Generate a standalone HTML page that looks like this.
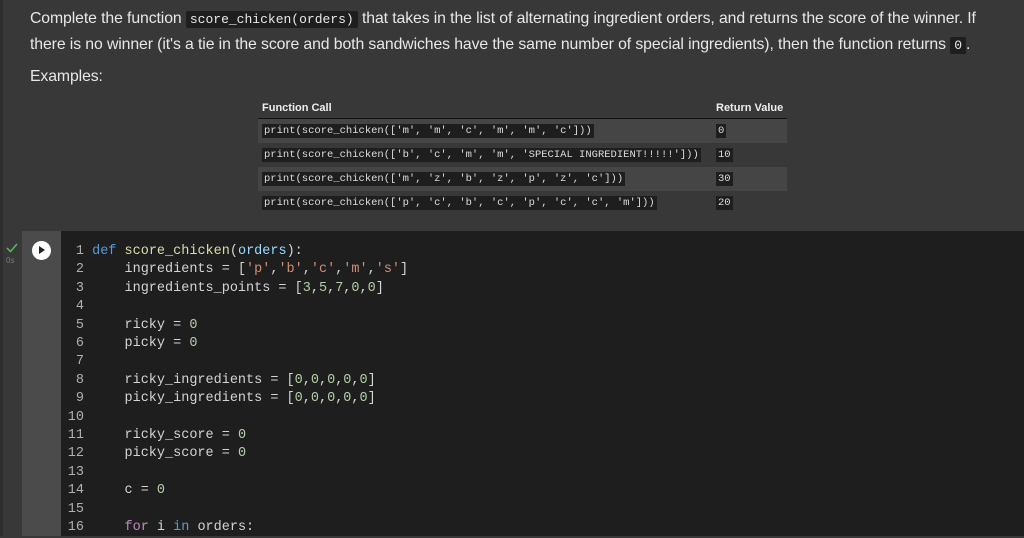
<!DOCTYPE html>
<html><head><style>
body{margin:0;width:1024px;height:536px;background:#383838;overflow:hidden;position:relative;font-family:"Liberation Sans",sans-serif;color:#e8e8e8}
.t{position:absolute;left:30px;font-size:15.8px;white-space:nowrap;letter-spacing:-0.1px}
.ic{background:#1e1e1e;padding:1px 4px;border-radius:2px;font-size:13px;font-family:"Liberation Mono",monospace;letter-spacing:0}
.edge{position:absolute;left:0;top:0;width:3px;height:536px;background:#2e2e2e}
table{position:absolute;left:258px;top:97px;border-collapse:collapse;font-size:11px}
th{font-weight:bold;text-align:left;height:21px;border-bottom:1px solid #111;padding:0 4px;color:#eee}
td{height:24px;padding:0 4px;font-family:"Liberation Mono",monospace;font-size:10.5px}
td span{background:#1e1e1e;padding:1px 2px;color:#ddd}
tr.s{background:#454545}
.gut{position:absolute;left:22px;top:231px;width:39px;height:305px;background:#4b4b4b}
.code{position:absolute;left:61px;top:231px;width:963px;height:305px;background:#1e1e1e}
.run{position:absolute;left:32px;top:241px;width:19px;height:19px;border-radius:50%;background:#fff}
.run:after{content:"";position:absolute;left:7px;top:5px;border-left:6px solid #222;border-top:4.5px solid transparent;border-bottom:4.5px solid transparent}
pre{position:absolute;left:64px;top:243px;margin:0;font-family:"Liberation Mono",monospace;font-size:13.5px;line-height:18.4px;color:#d4d4d4}
.n{color:#b0b0b0;display:inline-block;width:20px;text-align:right}
.k{color:#569cd6}.f{color:#dcdcaa}.p{color:#9cdcfe}.s{color:#ce9178}.d{color:#b5cea8}.c{color:#c586c0}
</style></head><body>
<div class="edge"></div>
<div class="t" style="top:10px">Complete the function <span class="ic">score_chicken(orders)</span> that takes in the list of alternating ingredient orders, and returns the score of the winner. If</div>
<div class="t" style="top:36px">there is no winner (it's a tie in the score and both sandwiches have the same number of special ingredients), then the function returns <span class="ic">0</span>.</div>
<div class="t" style="top:68px">Examples:</div>
<table>
<tr><th style="width:446px">Function Call</th><th style="text-align:right">Return Value</th></tr>
<tr class="s"><td><span>print(score_chicken(['m', 'm', 'c', 'm', 'm', 'c']))</span></td><td><span>0</span></td></tr>
<tr><td><span>print(score_chicken(['b', 'c', 'm', 'm', 'SPECIAL INGREDIENT!!!!!']))</span></td><td><span>10</span></td></tr>
<tr class="s"><td><span>print(score_chicken(['m', 'z', 'b', 'z', 'p', 'z', 'c']))</span></td><td><span>30</span></td></tr>
<tr><td><span>print(score_chicken(['p', 'c', 'b', 'c', 'p', 'c', 'c', 'm']))</span></td><td><span>20</span></td></tr>
</table>
<svg style="position:absolute;left:6px;top:243px" width="12" height="10"><path d="M1 5 L4.5 8.5 L11 1" stroke="#5cb85c" stroke-width="1.5" fill="none"/></svg>
<div style="position:absolute;left:6px;top:256px;font-size:8px;color:#777">0s</div>
<div class="gut"></div>
<div class="code"></div>
<div class="run"></div>
<pre><span class="n">1</span> <span class="k">def</span> <span class="f">score_chicken</span>(<span class="p">orders</span>):
<span class="n">2</span>     ingredients = [<span class="s">'p'</span>,<span class="s">'b'</span>,<span class="s">'c'</span>,<span class="s">'m'</span>,<span class="s">'s'</span>]
<span class="n">3</span>     ingredients_points = [<span class="d">3</span>,<span class="d">5</span>,<span class="d">7</span>,<span class="d">0</span>,<span class="d">0</span>]
<span class="n">4</span>
<span class="n">5</span>     ricky = <span class="d">0</span>
<span class="n">6</span>     picky = <span class="d">0</span>
<span class="n">7</span>
<span class="n">8</span>     ricky_ingredients = [<span class="d">0</span>,<span class="d">0</span>,<span class="d">0</span>,<span class="d">0</span>,<span class="d">0</span>]
<span class="n">9</span>     picky_ingredients = [<span class="d">0</span>,<span class="d">0</span>,<span class="d">0</span>,<span class="d">0</span>,<span class="d">0</span>]
<span class="n">10</span>
<span class="n">11</span>     ricky_score = <span class="d">0</span>
<span class="n">12</span>     picky_score = <span class="d">0</span>
<span class="n">13</span>
<span class="n">14</span>     c = <span class="d">0</span>
<span class="n">15</span>
<span class="n">16</span>     <span class="c">for</span> i <span class="k">in</span> orders:
</pre>
</body></html>
